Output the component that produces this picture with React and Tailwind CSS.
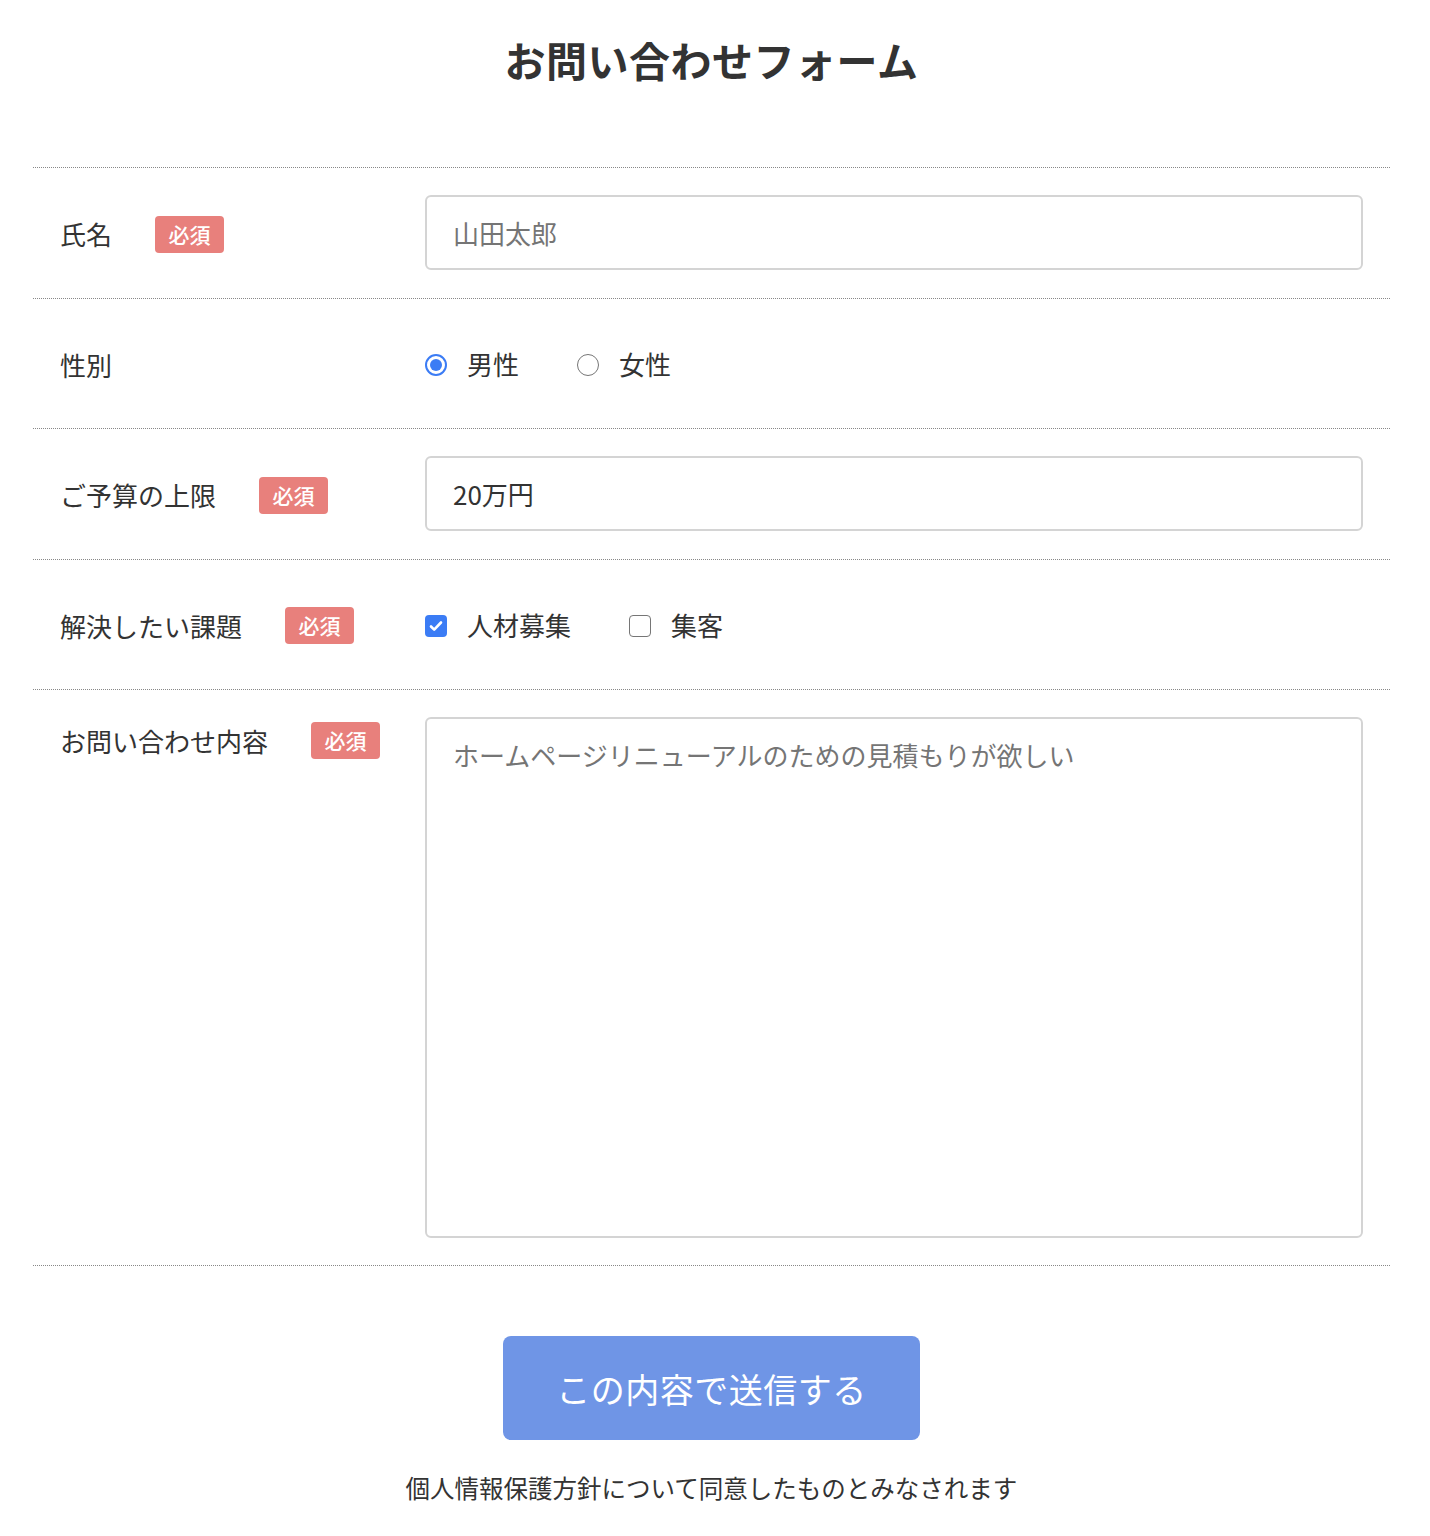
import { useState } from 'react';

const font = { fontFamily: '"Noto Sans CJK JP", "Noto Sans", sans-serif' };

function Badge() {
  return (
    <span className="inline-flex items-center justify-center w-[69px] h-[37px] rounded-[4px] bg-[#e8807c] text-white text-[21px] font-medium leading-none">
      必須
    </span>
  );
}

function Radio({ checked, label, onClick }) {
  return (
    <button type="button" onClick={onClick} className="flex items-center gap-[20px]">
      {checked ? (
        <span className="mt-[4px] w-[22px] h-[22px] rounded-full border-[2px] border-[#3b7cf5] flex items-center justify-center">
          <span className="w-[12px] h-[12px] rounded-full bg-[#3b7cf5]" />
        </span>
      ) : (
        <span className="mt-[4px] w-[22px] h-[22px] rounded-full border-[1.5px] border-[#767676]" />
      )}
      <span className="text-[26px] text-[#333]">{label}</span>
    </button>
  );
}

function Check({ checked, label, onClick }) {
  return (
    <button type="button" onClick={onClick} className="flex items-center gap-[20px]">
      {checked ? (
        <span className="mt-[4px] w-[22px] h-[22px] rounded-[4px] bg-[#3b7cf5] flex items-center justify-center">
          <svg viewBox="0 0 16 16" className="w-[16px] h-[16px]" fill="none" stroke="white" strokeWidth="2.6" strokeLinecap="round" strokeLinejoin="round">
            <path d="M3 8.5l3.2 3.2L13 4.5" />
          </svg>
        </span>
      ) : (
        <span className="mt-[4px] w-[22px] h-[22px] rounded-[4px] border-[1.5px] border-[#767676]" />
      )}
      <span className="text-[26px] text-[#333]">{label}</span>
    </button>
  );
}

function Row({ label, required, children, top }) {
  return (
    <div className={`flex border-b border-dotted border-[#888] px-[27px] ${top ? 'items-start pt-[27px] pb-[27px]' : 'items-center h-[130.5px]'}`}>
      <div className={`w-[365px] shrink-0 flex items-center gap-[43px] ${top ? 'pt-[5px]' : 'pt-[3px]'}`}>
        <span className="text-[26px] text-[#333] leading-none">{label}</span>
        {required && <Badge />}
      </div>
      <div className="flex-1">{children}</div>
    </div>
  );
}

export default function App() {
  const [gender, setGender] = useState('male');
  const [issues, setIssues] = useState({ hr: true, cust: false });

  return (
    <div style={font} className="min-h-[1536px] bg-white text-[#333] pl-[33px] pr-[40px]">
      <h1 className="text-center text-[41px] font-semibold leading-none pt-[39px] pb-[87px] tracking-[0.5px]">
        お問い合わせフォーム
      </h1>

      <div className="border-t border-dotted border-[#888]">
        <Row label="氏名" required>
          <input
            type="text"
            placeholder="山田太郎"
            className="w-full h-[75px] border-2 border-[#d4d4d4] rounded-[6px] px-[26px] text-[26px] text-[#333] placeholder:text-[#757575] outline-none"
          />
        </Row>

        <Row label="性別">
          <div className="flex items-center gap-[58px]">
            <Radio checked={gender === 'male'} label="男性" onClick={() => setGender('male')} />
            <Radio checked={gender === 'female'} label="女性" onClick={() => setGender('female')} />
          </div>
        </Row>

        <Row label="ご予算の上限" required>
          <input
            type="text"
            defaultValue="20万円"
            className="w-full h-[75px] border-2 border-[#d4d4d4] rounded-[6px] px-[26px] text-[26px] text-[#333] outline-none"
          />
        </Row>

        <Row label="解決したい課題" required>
          <div className="flex items-center gap-[58px]">
            <Check checked={issues.hr} label="人材募集" onClick={() => setIssues({ ...issues, hr: !issues.hr })} />
            <Check checked={issues.cust} label="集客" onClick={() => setIssues({ ...issues, cust: !issues.cust })} />
          </div>
        </Row>

        <Row label="お問い合わせ内容" required top>
          <textarea
            placeholder="ホームページリニューアルのための見積もりが欲しい"
            className="block w-full h-[521px] border-2 border-[#d4d4d4] rounded-[6px] px-[26px] py-[16px] text-[26px] leading-[1.5] text-[#333] placeholder:text-[#757575] outline-none resize-none"
          />
        </Row>
      </div>

      <div className="flex flex-col items-center pt-[70px]">
        <button
          type="button"
          className="w-[417px] h-[104px] rounded-[8px] bg-[#6f95e6] text-white text-[34px] tracking-[0.5px]"
        >
          この内容で送信する
        </button>
        <p className="mt-[30px] text-[24.5px] text-[#333]">
          個人情報保護方針について同意したものとみなされます
        </p>
      </div>
    </div>
  );
}
